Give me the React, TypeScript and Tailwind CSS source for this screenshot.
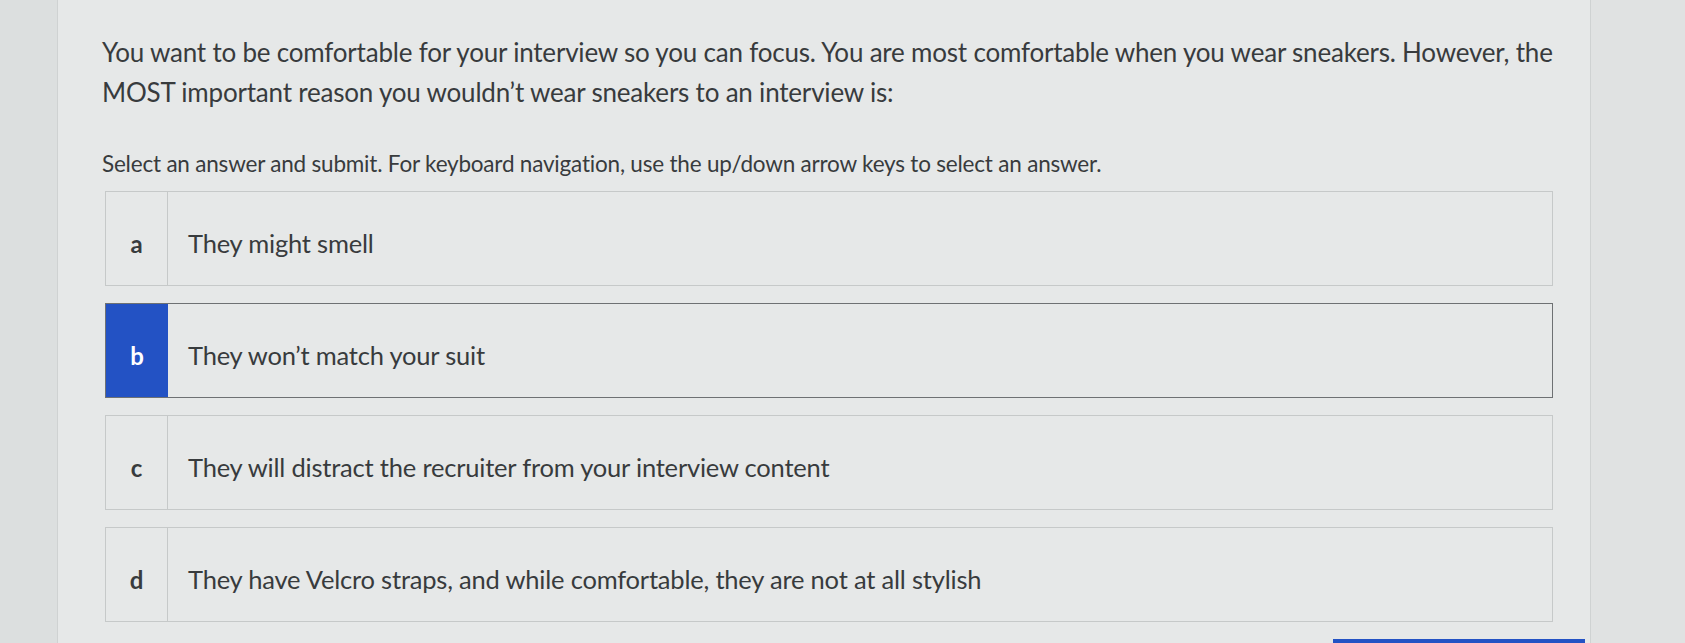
import React, { useState } from 'react';

const options = [
  { key: 'a', text: 'They might smell' },
  { key: 'b', text: 'They won\u2019t match your suit' },
  { key: 'c', text: 'They will distract the recruiter from your interview content' },
  { key: 'd', text: 'They have Velcro straps, and while comfortable, they are not at all stylish' },
];

export default function App() {
  const [selected, setSelected] = useState('b');

  return (
    <div
      className="flex h-[643px] w-full overflow-hidden bg-[#dfe1e1] text-[#383b3d]"
      style={{ fontFamily: 'Lato, "Noto Sans", sans-serif' }}
    >
      {/* left gutter */}
      <div className="w-[58px] shrink-0 border-r border-[#cfd2d2] bg-[#dcdfdf]" />

      {/* question panel */}
      <div className="relative flex flex-1 flex-col bg-[#e6e8e8] pl-[44px] pr-[37px] pt-[32px]">
        <h1 className="text-[26px] font-normal leading-[40px] tracking-[-0.2px]">
          You want to be comfortable for your interview so you can focus. You are most comfortable when you wear sneakers. However, the MOST important reason you wouldn’t wear sneakers to an interview is:
        </h1>

        <p className="mt-[37px] text-[22.5px] leading-[30px] tracking-[-0.2px]">
          Select an answer and submit. For keyboard navigation, use the up/down arrow keys to select an answer.
        </p>

        <div className="mt-[12px] flex flex-col gap-[17px] pl-[3px]">
          {options.map((o) => {
            const active = o.key === selected;
            return (
              <button
                key={o.key}
                onClick={() => setSelected(o.key)}
                className={`flex h-[95px] w-full items-stretch border text-left ${
                  active ? 'border-[#6e7173]' : 'border-[#c6c9c9]'
                }`}
              >
                <div
                  className={`flex w-[62px] shrink-0 items-center justify-center pt-[10px] text-[24px] font-bold ${
                    active ? 'bg-[#2352c4] text-white' : 'border-r border-[#c6c9c9] text-[#383b3d]'
                  }`}
                >
                  {o.key}
                </div>
                <div className="flex items-center pl-[20px] pt-[10px] text-[25.5px] tracking-[-0.2px]">{o.text}</div>
              </button>
            );
          })}
        </div>

        {/* submit button peeking at the bottom */}
        <div className="absolute bottom-0 right-[5px] h-[4px] w-[252px] bg-[#2352c4]" />
      </div>

      {/* right gutter */}
      <div className="w-[95px] shrink-0 border-l border-[#cfd2d2] bg-[#e0e2e2]" />
    </div>
  );
}
